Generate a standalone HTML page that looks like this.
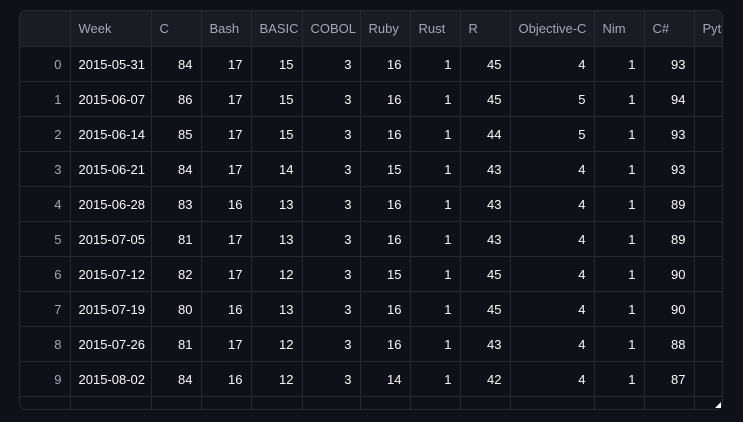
<!DOCTYPE html>
<html><head><style>
html,body{margin:0;padding:0;background:#0e1117;width:743px;height:422px;overflow:hidden}
.wrap{position:absolute;left:19px;top:10px;width:702px;height:398px;border:1px solid #262a33;border-radius:7px;overflow:hidden;background:#0e1117}
table{border-collapse:collapse;table-layout:fixed;width:760px;font-family:"Liberation Sans",sans-serif;font-size:13px;color:#fafafa}
td,th{height:34px;border-right:1px solid #262a33;border-bottom:1px solid #262a33;padding:0 8px;white-space:nowrap;overflow:hidden;text-align:right}
th{background:#1a1c24;color:#a3a8b4;font-weight:normal;text-align:left;height:35px}
td.i{color:#a3a8b4}
td.w{text-align:left}
.corner{position:absolute;left:715px;top:402px;width:0;height:0;border-left:6px solid transparent;border-bottom:6px solid #fff}
</style></head><body>
<div class="wrap"><table>
<colgroup><col style="width:50px"><col style="width:81px"><col style="width:50px"><col style="width:50px"><col style="width:51px"><col style="width:58px"><col style="width:50px"><col style="width:50px"><col style="width:50px"><col style="width:84px"><col style="width:50px"><col style="width:50px"><col style="width:86px"></colgroup>
<tr><th></th><th>Week</th><th>C</th><th>Bash</th><th>BASIC</th><th>COBOL</th><th>Ruby</th><th>Rust</th><th>R</th><th>Objective-C</th><th>Nim</th><th>C#</th><th>Python</th></tr>
<tr><td class="i">0</td><td class="w">2015-05-31</td><td>84</td><td>17</td><td>15</td><td>3</td><td>16</td><td>1</td><td>45</td><td>4</td><td>1</td><td>93</td><td></td></tr>
<tr><td class="i">1</td><td class="w">2015-06-07</td><td>86</td><td>17</td><td>15</td><td>3</td><td>16</td><td>1</td><td>45</td><td>5</td><td>1</td><td>94</td><td></td></tr>
<tr><td class="i">2</td><td class="w">2015-06-14</td><td>85</td><td>17</td><td>15</td><td>3</td><td>16</td><td>1</td><td>44</td><td>5</td><td>1</td><td>93</td><td></td></tr>
<tr><td class="i">3</td><td class="w">2015-06-21</td><td>84</td><td>17</td><td>14</td><td>3</td><td>15</td><td>1</td><td>43</td><td>4</td><td>1</td><td>93</td><td></td></tr>
<tr><td class="i">4</td><td class="w">2015-06-28</td><td>83</td><td>16</td><td>13</td><td>3</td><td>16</td><td>1</td><td>43</td><td>4</td><td>1</td><td>89</td><td></td></tr>
<tr><td class="i">5</td><td class="w">2015-07-05</td><td>81</td><td>17</td><td>13</td><td>3</td><td>16</td><td>1</td><td>43</td><td>4</td><td>1</td><td>89</td><td></td></tr>
<tr><td class="i">6</td><td class="w">2015-07-12</td><td>82</td><td>17</td><td>12</td><td>3</td><td>15</td><td>1</td><td>45</td><td>4</td><td>1</td><td>90</td><td></td></tr>
<tr><td class="i">7</td><td class="w">2015-07-19</td><td>80</td><td>16</td><td>13</td><td>3</td><td>16</td><td>1</td><td>45</td><td>4</td><td>1</td><td>90</td><td></td></tr>
<tr><td class="i">8</td><td class="w">2015-07-26</td><td>81</td><td>17</td><td>12</td><td>3</td><td>16</td><td>1</td><td>43</td><td>4</td><td>1</td><td>88</td><td></td></tr>
<tr><td class="i">9</td><td class="w">2015-08-02</td><td>84</td><td>16</td><td>12</td><td>3</td><td>14</td><td>1</td><td>42</td><td>4</td><td>1</td><td>87</td><td></td></tr>
<tr><td class="i"></td><td class="w"></td><td></td><td></td><td></td><td></td><td></td><td></td><td></td><td></td><td></td><td></td><td></td></tr>
</table></div>
<div class="corner"></div>
</body></html>
